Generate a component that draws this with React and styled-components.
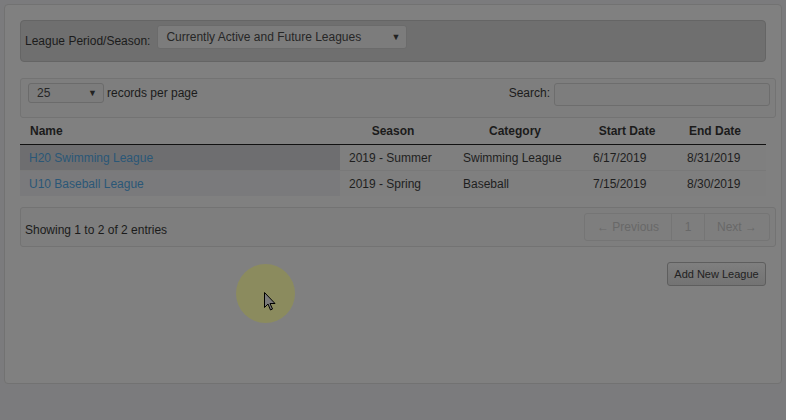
import React from "react";
import styled, { createGlobalStyle } from "styled-components";

const Global = createGlobalStyle`
  html, body { margin: 0; padding: 0; background: #7b7b7d; }
  body { font-family: "Liberation Sans", Arial, sans-serif; font-size: 12px; color: #1b1b1b; }
  #root { padding: 4px; position: relative; height: 412px; }
`;

const Panel = styled.div`
  box-sizing: border-box;
  width: 778px;
  height: 380px;
  background: #808080;
  border: 1px solid #727272;
  border-radius: 4px;
  padding: 15px;
`;

const FilterBar = styled.div`
  box-sizing: border-box;
  height: 42px;
  background: #6f6f6f;
  border: 1px solid #656565;
  border-radius: 4px;
  padding: 4px;
  display: flex;
  align-items: flex-start;
  gap: 7px;
`;

const Label = styled.span`
  padding-top: ${p => p.$top || 0}px;
  line-height: 14px;
  white-space: nowrap;
`;

const Select = styled.div`
  box-sizing: border-box;
  width: ${p => p.$w}px;
  height: ${p => p.$h}px;
  background: #7c7c7c;
  border: 1px solid #6b6b6b;
  border-radius: 3px;
  display: flex;
  align-items: center;
  justify-content: space-between;
  padding: 0 6px 0 8px;
  color: #262626;
  font-size: 12px;
`;

const Arrow = styled.span`
  font-size: 9px;
  color: #222;
`;

const ToolBox = styled.div`
  box-sizing: border-box;
  margin-right: -10px;
  margin-top: ${p => p.$mt}px;
  height: 40px;
  background: #7e7e7e;
  border: 1px solid #737373;
  border-radius: 3px;
  padding: ${p => p.$pt}px 5px 0 ${p => p.$pl}px;
  display: flex;
  align-items: flex-start;
  justify-content: space-between;
`;

const Group = styled.div`
  display: flex;
  align-items: ${p => p.$align || "center"};
  gap: ${p => p.$gap || 4}px;
`;

const SearchInput = styled.div`
  box-sizing: border-box;
  width: 216px;
  height: 23px;
  background: #7d7d7d;
  border: 1px solid #6d6d6d;
  border-radius: 3px;
`;

const Table = styled.table`
  width: 746px;
  border-collapse: collapse;
  table-layout: fixed;
`;

const Th = styled.th`
  height: 26px;
  padding: 0 ${p => (p.$left ? 0 : p.$pr || 18)}px 0 10px;
  text-align: ${p => (p.$left ? "left" : "center")};
  white-space: nowrap;
  font-weight: bold;
  font-size: 12px;
  color: #1b1b1b;
  border-bottom: 1px solid #111;
`;

const Td = styled.td`
  height: 25px;
  padding: 0 9px;
  background: ${p => (p.$sorted ? (p.$odd ? "#6e6e70" : "#7a7a7c") : "#7f7f7f")};
  border-top: 1px solid ${p => (p.$first ? "transparent" : "#797979")};
  white-space: nowrap;
  color: #1e1e1e;
`;

const LinkText = styled.a`
  color: #2a5777;
  text-decoration: none;
`;

const Pager = styled.div`
  display: flex;
  box-sizing: border-box;
  height: 28px;
  border: 1px solid #757575;
  border-radius: 3px;
`;

const PageBtn = styled.span`
  display: flex;
  align-items: center;
  justify-content: center;
  width: ${p => p.$w}px;
  border-left: ${p => (p.$first ? "none" : "1px solid #757575")};
  color: #686868;
  font-size: 12px;
`;

const Actions = styled.div`
  display: flex;
  justify-content: flex-end;
  margin-top: 15px;
`;

const Button = styled.button`
  box-sizing: border-box;
  width: 99px;
  height: 24px;
  font-family: "Liberation Sans", Arial, sans-serif;
  font-size: 11px;
  color: #222;
  background: linear-gradient(#7f7f7f, #737373);
  border: 1px solid #5e5e5e;
  border-radius: 3px;
  padding: 0;
`;

const Spot = styled.div`
  position: absolute;
  left: 236px;
  top: 264px;
  width: 59px;
  height: 59px;
  border-radius: 50%;
  background: #8b8b5e;
`;

const Cursor = styled.svg`
  position: absolute;
  left: 264px;
  top: 292px;
`;

const rows = [
  { name: "H20 Swimming League", season: "2019 - Summer", cat: "Swimming League", start: "6/17/2019", end: "8/31/2019" },
  { name: "U10 Baseball League", season: "2019 - Spring", cat: "Baseball", start: "7/15/2019", end: "8/30/2019" },
];

export default function App() {
  return (
    <>
      <Global />
      <Panel>
        <FilterBar>
          <Label $top={9}>League Period/Season:</Label>
          <Select $w={250} $h={24}>
            <span>Currently Active and Future Leagues</span>
            <Arrow>▼</Arrow>
          </Select>
        </FilterBar>

        <ToolBox $mt={16} $pt={4} $pl={7}>
          <Group $gap={3}>
            <Select $w={76} $h={20}>
              <span>25</span>
              <Arrow>▼</Arrow>
            </Select>
            <Label>records per page</Label>
          </Group>
          <Group $gap={4} $align="flex-start">
            <Label $top={3}>Search:</Label>
            <SearchInput />
          </Group>
        </ToolBox>

        <Table>
          <colgroup>
            <col style={{ width: 320 }} />
            <col style={{ width: 114 }} />
            <col style={{ width: 130 }} />
            <col style={{ width: 94 }} />
            <col style={{ width: 88 }} />
          </colgroup>
          <thead>
            <tr>
              <Th $left>Name</Th>
              <Th>Season</Th>
              <Th>Category</Th>
              <Th>Start Date</Th>
              <Th $pr={24}>End Date</Th>
            </tr>
          </thead>
          <tbody>
            {rows.map((r, i) => (
              <tr key={r.name}>
                <Td $sorted $odd={i === 0} $first={i === 0}>
                  <LinkText>{r.name}</LinkText>
                </Td>
                <Td $first={i === 0}>{r.season}</Td>
                <Td $first={i === 0}>{r.cat}</Td>
                <Td $first={i === 0}>{r.start}</Td>
                <Td $first={i === 0}>{r.end}</Td>
              </tr>
            ))}
          </tbody>
        </Table>

        <ToolBox $mt={11} $pt={5} $pl={4}>
          <Label $top={10}>Showing 1 to 2 of 2 entries</Label>
          <Pager>
            <PageBtn $w={86} $first>← Previous</PageBtn>
            <PageBtn $w={32}>1</PageBtn>
            <PageBtn $w={64}>Next →</PageBtn>
          </Pager>
        </ToolBox>

        <Actions>
          <Button>Add New League</Button>
        </Actions>
      </Panel>
      <Spot />
      <Cursor width="12" height="19" viewBox="0 0 12 19">
        <path d="M0.5 0.5 L0.5 15.5 L4 12 L6.5 18 L8.5 17 L6 11.5 L11 11.5 Z" fill="#7a7a7a" stroke="#000" strokeWidth="1" />
      </Cursor>
    </>
  );
}
